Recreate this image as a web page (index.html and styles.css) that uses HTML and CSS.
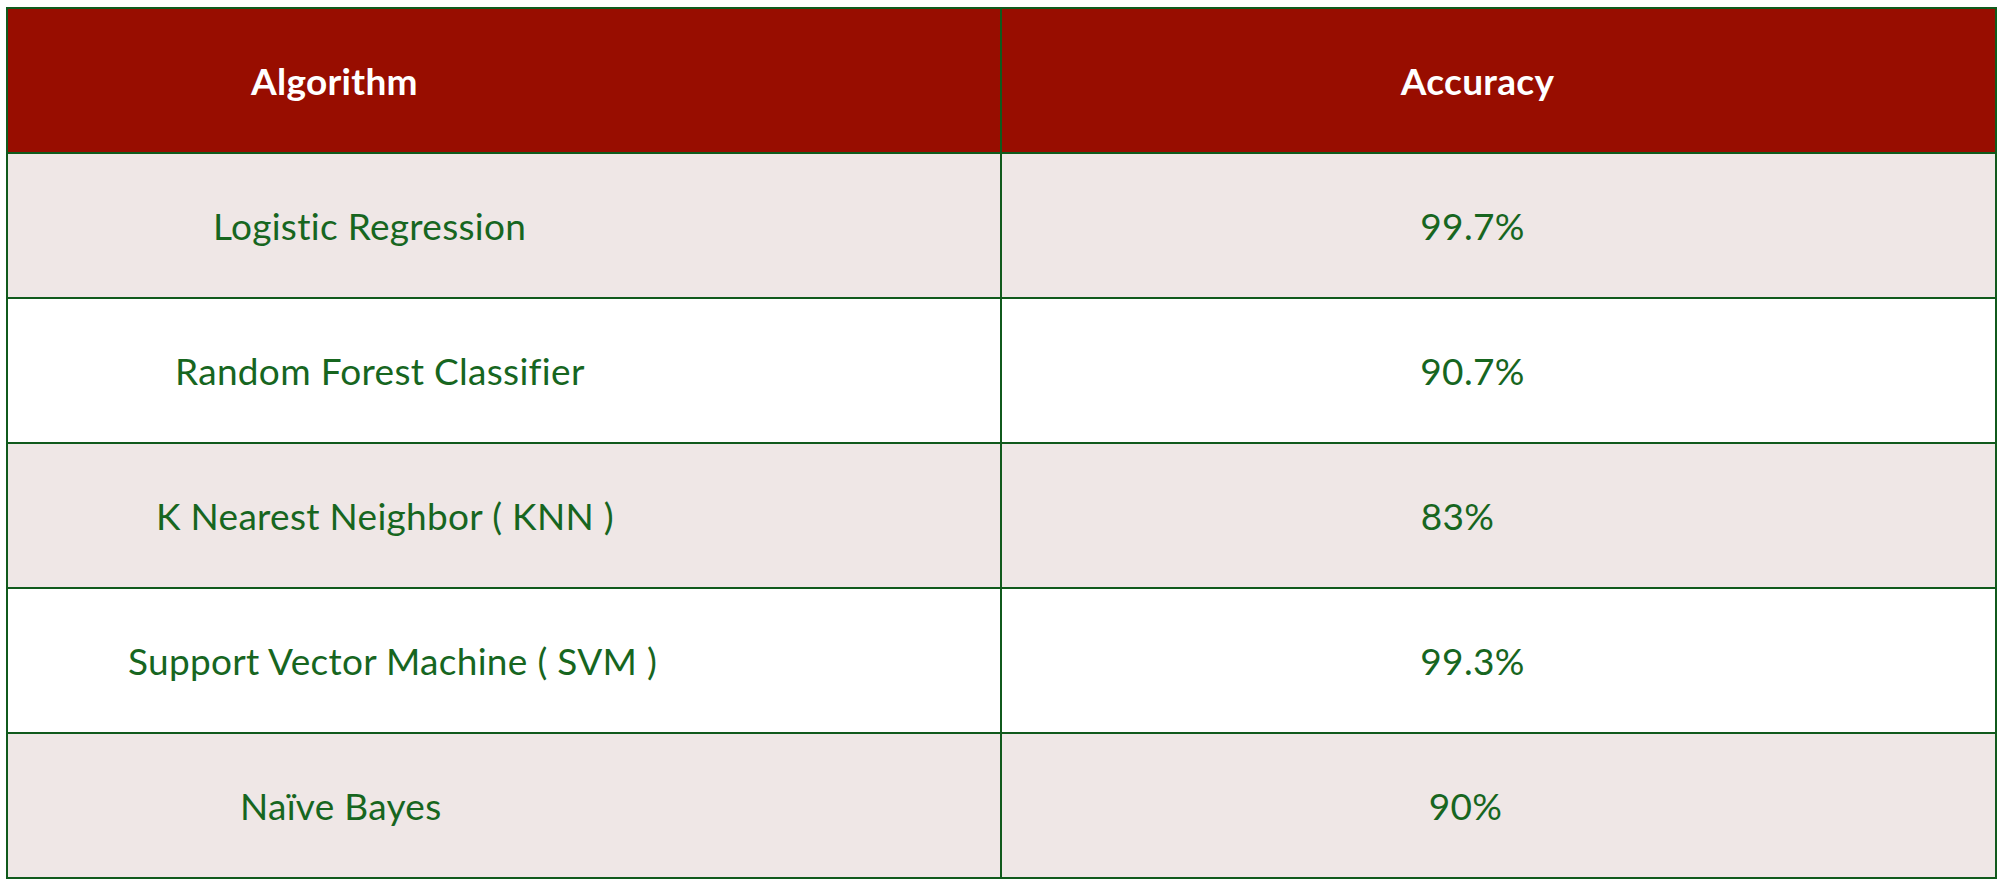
FILE: index.html
```html
<!DOCTYPE html>
<html>
<head>
<meta charset="utf-8">
<link rel="stylesheet" href="styles.css">
</head>
<body>
<div class="table">
  <div class="cell head algo">Algorithm</div>
  <div class="cell head acc">Accuracy</div>

  <div class="cell shade name n-lr">Logistic Regression</div>
  <div class="cell shade val">99.7%</div>

  <div class="cell name n-rf">Random Forest Classifier</div>
  <div class="cell val">90.7%</div>

  <div class="cell shade name n-knn">K Nearest Neighbor ( KNN )</div>
  <div class="cell shade val v-83">83%</div>

  <div class="cell name n-svm">Support Vector Machine ( SVM )</div>
  <div class="cell val">99.3%</div>

  <div class="cell shade name n-nb">Naïve Bayes</div>
  <div class="cell shade val v-90">90%</div>
</div>
</body>
</html>
```

FILE: styles.css
```css
html, body {
  margin: 0;
  padding: 0;
  background: #ffffff;
}
body {
  padding: 7px 0 0 6px;
  font-family: Lato, "Open Sans", "Liberation Sans", sans-serif;
}
.table {
  display: grid;
  grid-template-columns: 992px 993px;
  grid-auto-rows: 143px;
  gap: 2px;
  padding: 2px;
  width: max-content;
  background: #105a1c;
}
.cell {
  display: flex;
  align-items: center;
  background: #ffffff;
  color: #17661f;
  font-size: 37px;
  letter-spacing: 0.3px;
  white-space: nowrap;
}
.shade {
  background: #efe7e6;
}
.head {
  background: #980d00;
  color: #ffffff;
  font-weight: 700;
}
.algo { padding-left: 243px; }
.acc { justify-content: center; padding-right: 42px; }
.name { justify-content: flex-start; }
.n-lr { padding-left: 205px; }
.n-rf { padding-left: 167px; }
.n-knn { padding-left: 148px; }
.n-svm { padding-left: 120px; }
.n-nb { padding-left: 232px; }
.val { justify-content: center; padding-right: 52px; }
.v-83 { padding-right: 82px; }
.v-90 { padding-right: 66px; }
```
